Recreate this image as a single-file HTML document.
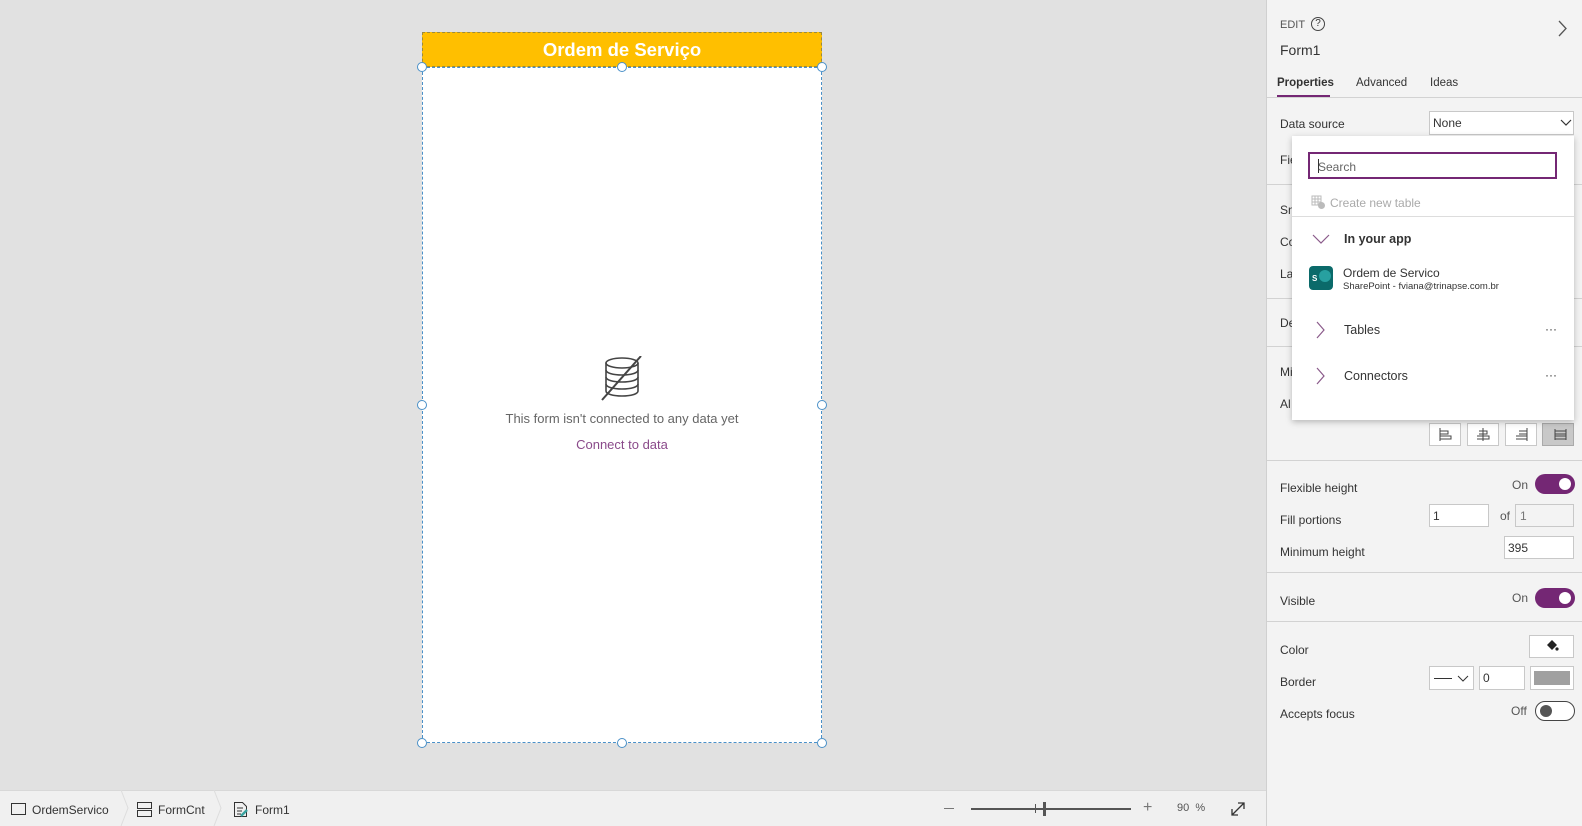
<!DOCTYPE html>
<html><head><meta charset="utf-8"><style>
*{box-sizing:border-box;margin:0;padding:0}
body{width:1582px;height:826px;overflow:hidden;background:#e1e1e1;font-family:"Segoe UI","Liberation Sans",sans-serif;color:#333;position:relative;font-size:12px}
.a{position:absolute}
.t{position:absolute;white-space:nowrap;line-height:1}
.circ{position:absolute;width:10px;height:10px;border:1.5px solid #4a90c8;border-radius:50%;background:#fff}
.inp{position:absolute;background:#fff;border:1px solid #c8c8c8}
.hr{position:absolute;left:1267px;width:315px;height:1px;background:#d2d2d2}
.tog{position:absolute;width:40px;height:20px;border-radius:10px;background:#742774}
.tog:after{content:"";position:absolute;right:4px;top:4px;width:12px;height:12px;border-radius:50%;background:#fff}
</style></head><body>
<!-- canvas -->
<div class="a" style="left:422px;top:32px;width:400px;height:35px;background:#ffbf00;border:1px dashed #9a8a40"></div>
<div class="t" style="left:422px;top:41px;width:400px;text-align:center;color:#fff;font-weight:bold;font-size:18.5px">Ordem de Serviço</div>
<div class="a" style="left:422px;top:67px;width:400px;height:676px;background:#fff;border:1.5px dashed #4a90c8"></div>
<div class="circ" style="left:417px;top:62px"></div><div class="circ" style="left:617px;top:62px"></div><div class="circ" style="left:817px;top:62px"></div>
<div class="circ" style="left:417px;top:400px"></div><div class="circ" style="left:817px;top:400px"></div>
<div class="circ" style="left:417px;top:738px"></div><div class="circ" style="left:617px;top:738px"></div><div class="circ" style="left:817px;top:738px"></div>
<svg class="a" style="left:600px;top:356px" width="44" height="46" viewBox="0 0 44 46" fill="none" stroke="#444" stroke-width="1.6">
<ellipse cx="22" cy="7" rx="16" ry="5"/><path d="M6 7v28c0 3 7 5 16 5s16-2 16-5V7"/><path d="M6 14c0 3 7 5 16 5s16-2 16-5M6 21c0 3 7 5 16 5s16-2 16-5M6 28c0 3 7 5 16 5s16-2 16-5"/><path d="M41 0L2 44" stroke-width="2"/></svg>
<div class="t" style="left:422px;top:412px;width:400px;text-align:center;color:#666;font-size:13px">This form isn't connected to any data yet</div>
<div class="t" style="left:422px;top:438px;width:400px;text-align:center;color:#8a4a8a;font-size:13px">Connect to data</div>
<!-- bottom bar -->
<div class="a" style="left:0;top:790px;width:1266px;height:36px;background:#f0f0f0;border-top:1px solid #d8d8d8"></div>
<div class="a" style="left:11px;top:803px;width:15px;height:12px;border:1px solid #333"></div>
<div class="t" style="left:32px;top:804px;font-size:12px">OrdemServico</div>
<svg class="a" style="left:120px;top:790px" width="10" height="36"><path d="M1 0L8 18L1 36" stroke="#ddd" fill="none"/></svg>
<div class="a" style="left:137px;top:802px;width:15px;height:7px;border:1px solid #333"></div><div class="a" style="left:137px;top:810px;width:15px;height:7px;border:1px solid #333"></div>
<div class="t" style="left:158px;top:804px;font-size:12px">FormCnt</div>
<svg class="a" style="left:213px;top:790px" width="10" height="36"><path d="M1 0L8 18L1 36" stroke="#ddd" fill="none"/></svg>
<svg class="a" style="left:233px;top:801px" width="16" height="17" fill="none" stroke="#333"><path d="M1.5 1.5h8l4 4v10h-12z"/><path d="M4 7h6M4 10h5M4 13h4"/><path d="M8 15l6-6" stroke="#3aa3a0" stroke-width="2.5"/></svg>
<div class="t" style="left:255px;top:804px;font-size:12px">Form1</div>
<div class="a" style="left:944px;top:808px;width:10px;height:1px;background:#777"></div>
<div class="a" style="left:971px;top:808px;width:160px;height:2px;background:#555"></div>
<div class="a" style="left:1035px;top:804px;width:1px;height:9px;background:#555"></div>
<div class="a" style="left:1043px;top:802px;width:3px;height:14px;background:#555"></div>
<div class="t" style="left:1143px;top:800px;font-size:16px;color:#777">+</div>
<div class="t" style="left:1177px;top:803px;font-size:11px;color:#555">90&nbsp;&nbsp;%</div>
<svg class="a" style="left:1230px;top:801px" width="16" height="16" fill="none" stroke="#333" stroke-width="1.3"><path d="M2 14L14 2M8 2h6v6M2 8v6h6"/></svg>
<!-- panel -->
<div class="a" style="left:1266px;top:0;width:316px;height:826px;background:#f3f3f3;border-left:1px solid #d0d0d0"></div>
<div class="t" style="left:1280px;top:20px;font-size:11px;color:#555">EDIT</div>
<div class="a" style="left:1311px;top:17px;width:14px;height:14px;border:1px solid #444;border-radius:50%;font-size:10px;text-align:center;line-height:12px">?</div>
<svg class="a" style="left:1558px;top:20px" width="10" height="17"><path d="M1 1l7 7.5L1 16" stroke="#555" fill="none" stroke-width="1.3"/></svg>
<div class="t" style="left:1280px;top:43px;font-size:14px">Form1</div>
<div class="t" style="left:1277px;top:78px;font-size:11.5px;font-weight:bold">Properties</div>
<div class="a" style="left:1277px;top:95px;width:53px;height:2px;background:#742774"></div>
<div class="t" style="left:1356px;top:78px;font-size:11.5px">Advanced</div>
<div class="t" style="left:1430px;top:78px;font-size:11.5px">Ideas</div>
<div class="hr" style="top:97px"></div>
<div class="t" style="left:1280px;top:118px;font-size:12px">Data source</div>
<div class="inp" style="left:1429px;top:111px;width:145px;height:24px"></div>
<div class="t" style="left:1433px;top:117px;font-size:12px">None</div>
<svg class="a" style="left:1560px;top:119px" width="12" height="8"><path d="M1 1l5 5 5-5" stroke="#333" fill="none" stroke-width="1.2"/></svg>
<div class="t" style="left:1280px;top:154px;font-size:12px">Fie</div>
<div class="hr" style="top:184px"></div>
<div class="t" style="left:1280px;top:204px;font-size:12px">Sn</div>
<div class="t" style="left:1280px;top:236px;font-size:12px">Co</div>
<div class="t" style="left:1280px;top:268px;font-size:12px">La</div>
<div class="hr" style="top:298px"></div>
<div class="t" style="left:1280px;top:317px;font-size:12px">De</div>
<div class="hr" style="top:346px"></div>
<div class="t" style="left:1280px;top:366px;font-size:12px">Mi</div>
<div class="t" style="left:1280px;top:398px;font-size:12px">Al</div>
<div class="inp" style="left:1429px;top:423px;width:32px;height:23px"></div>
<div class="inp" style="left:1467px;top:423px;width:32px;height:23px"></div>
<div class="inp" style="left:1505px;top:423px;width:32px;height:23px"></div>
<div class="a" style="left:1542px;top:423px;width:32px;height:23px;background:#c8c8c8;border:1px solid #aaa"></div>
<svg class="a" style="left:1439px;top:428px" width="130" height="13" fill="none" stroke="#444"><path d="M1 0v13M1 3h8v3H1M1 8h11v3H1"/><path d="M44 0v13M40 3h8v3h-8M38 8h12v3H38"/><path d="M88 0v13M80 3h8v3h-8M77 8h11v3H77"/><path d="M116 1v11M127 1v11M116 3h11v3h-11M116 8h11v3h-11"/></svg>
<div class="hr" style="top:460px"></div>
<div class="t" style="left:1280px;top:482px;font-size:12px">Flexible height</div>
<div class="t" style="left:1512px;top:479px;font-size:12px;color:#555">On</div>
<div class="tog" style="left:1535px;top:474px"></div>
<div class="t" style="left:1280px;top:514px;font-size:12px">Fill portions</div>
<div class="inp" style="left:1429px;top:504px;width:60px;height:23px"></div>
<div class="t" style="left:1433px;top:510px;font-size:12px">1</div>
<div class="t" style="left:1500px;top:510px;font-size:12px;color:#555">of</div>
<div class="a" style="left:1515px;top:504px;width:59px;height:23px;background:#f3f3f3;border:1px solid #c8c8c8"></div>
<div class="t" style="left:1520px;top:510px;font-size:12px;color:#777">1</div>
<div class="t" style="left:1280px;top:546px;font-size:12px">Minimum height</div>
<div class="inp" style="left:1504px;top:536px;width:70px;height:23px"></div>
<div class="t" style="left:1508px;top:542px;font-size:12px">395</div>
<div class="hr" style="top:572px"></div>
<div class="t" style="left:1280px;top:595px;font-size:12px">Visible</div>
<div class="t" style="left:1512px;top:592px;font-size:12px;color:#555">On</div>
<div class="tog" style="left:1535px;top:588px"></div>
<div class="hr" style="top:621px"></div>
<div class="t" style="left:1280px;top:644px;font-size:12px">Color</div>
<div class="inp" style="left:1529px;top:635px;width:45px;height:23px"></div>
<svg class="a" style="left:1545px;top:639px" width="14" height="13"><path d="M2 6l5-5 5 5-5 5z" fill="#222"/><circle cx="12" cy="10" r="1.6" fill="#222"/></svg>
<div class="t" style="left:1280px;top:676px;font-size:12px">Border</div>
<div class="inp" style="left:1429px;top:666px;width:45px;height:24px"></div>
<div class="a" style="left:1434px;top:678px;width:18px;height:1px;background:#333"></div>
<svg class="a" style="left:1457px;top:675px" width="12" height="8"><path d="M1 1l5 5 5-5" stroke="#333" fill="none"/></svg>
<div class="inp" style="left:1479px;top:666px;width:46px;height:24px"></div>
<div class="t" style="left:1483px;top:672px;font-size:12px">0</div>
<div class="inp" style="left:1530px;top:666px;width:44px;height:24px"></div>
<div class="a" style="left:1534px;top:671px;width:36px;height:14px;background:#a0a0a0"></div>
<div class="t" style="left:1280px;top:708px;font-size:12px">Accepts focus</div>
<div class="t" style="left:1511px;top:705px;font-size:12px;color:#555">Off</div>
<div class="a" style="left:1535px;top:701px;width:40px;height:20px;border-radius:10px;border:1.3px solid #444;background:#fff"></div>
<div class="a" style="left:1540px;top:705px;width:12px;height:12px;border-radius:50%;background:#555"></div>
<!-- popup -->
<div class="a" style="left:1292px;top:136px;width:282px;height:284px;background:#fff;box-shadow:0 2px 6px rgba(0,0,0,.25)"></div>
<div class="a" style="left:1308px;top:152px;width:249px;height:27px;border:2px solid #742774;background:#fff"></div>
<div class="a" style="left:1318px;top:159px;width:1px;height:14px;background:#333"></div>
<div class="t" style="left:1318px;top:161px;font-size:12px;color:#666">Search</div>
<svg class="a" style="left:1311px;top:195px" width="14" height="14" fill="none" stroke="#bbb"><rect x="1" y="1" width="9" height="9"/><path d="M1 4h9M1 7h9M4 1v9M7 1v9"/><circle cx="10.5" cy="10.5" r="3" fill="#bbb"/></svg>
<div class="t" style="left:1330px;top:197px;font-size:12px;color:#aaa">Create new table</div>
<div class="a" style="left:1292px;top:216px;width:282px;height:1px;background:#ddd"></div>
<svg class="a" style="left:1312px;top:234px" width="18" height="10"><path d="M1 1l8 8 8-8" stroke="#8a5a8a" fill="none" stroke-width="1.2"/></svg>
<div class="t" style="left:1344px;top:233px;font-size:12.5px;font-weight:600">In your app</div>
<div class="a" style="left:1309px;top:266px;width:24px;height:24px;border-radius:4px;background:#0b6a6a"></div>
<div class="a" style="left:1319px;top:270px;width:12px;height:12px;border-radius:50%;background:#27a0a0"></div>
<div class="t" style="left:1312px;top:275px;font-size:8px;color:#fff;font-weight:bold">S</div>
<div class="t" style="left:1343px;top:267px;font-size:12px">Ordem de Servico</div>
<div class="t" style="left:1343px;top:282px;font-size:9.5px">SharePoint - fviana@trinapse.com.br</div>
<svg class="a" style="left:1316px;top:321px" width="10" height="18"><path d="M1 1l7 8-7 8" stroke="#8a5a8a" fill="none" stroke-width="1.2"/></svg>
<div class="t" style="left:1344px;top:324px;font-size:12.5px">Tables</div>
<div class="t" style="left:1545px;top:323px;font-size:12px">···</div>
<svg class="a" style="left:1316px;top:367px" width="10" height="18"><path d="M1 1l7 8-7 8" stroke="#8a5a8a" fill="none" stroke-width="1.2"/></svg>
<div class="t" style="left:1344px;top:370px;font-size:12.5px">Connectors</div>
<div class="t" style="left:1545px;top:369px;font-size:12px">···</div>
</body></html>
